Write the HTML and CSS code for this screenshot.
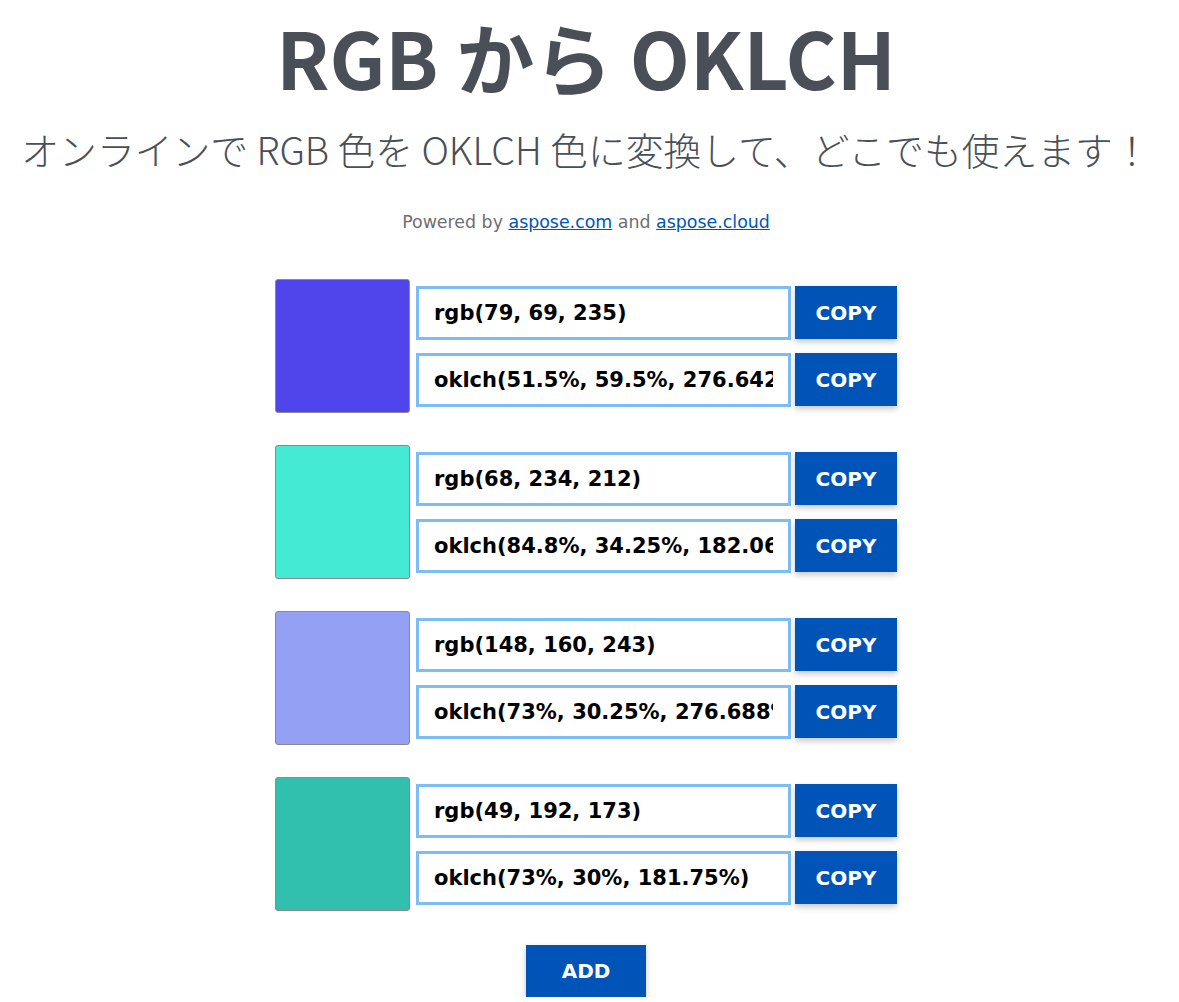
FILE: index.html
```html
<!DOCTYPE html>
<html lang="ja">
<head>
<meta charset="utf-8">
<title>RGB から OKLCH</title>
<link rel="stylesheet" href="styles.css">
</head>
<body>
<header class="head">
  <h1 class="title">RGB から OKLCH</h1>
  <p class="subtitle">オンラインで RGB 色を OKLCH 色に変換して、どこでも使えます！</p>
  <p class="powered">Powered by <a href="#">aspose.com</a> and <a href="#">aspose.cloud</a></p>
</header>
<main class="list">
  <div class="group">
    <div class="swatch" style="background:#4f45eb"></div>
    <div class="fields">
      <div class="line"><input class="val" value="rgb(79, 69, 235)"><button class="btn">COPY</button></div>
      <div class="line"><input class="val" value="oklch(51.5%, 59.5%, 276.642%)"><button class="btn">COPY</button></div>
    </div>
  </div>
  <div class="group">
    <div class="swatch" style="background:#44ead4"></div>
    <div class="fields">
      <div class="line"><input class="val" value="rgb(68, 234, 212)"><button class="btn">COPY</button></div>
      <div class="line"><input class="val" value="oklch(84.8%, 34.25%, 182.06%)"><button class="btn">COPY</button></div>
    </div>
  </div>
  <div class="group">
    <div class="swatch" style="background:#94a0f3"></div>
    <div class="fields">
      <div class="line"><input class="val" value="rgb(148, 160, 243)"><button class="btn">COPY</button></div>
      <div class="line"><input class="val" value="oklch(73%, 30.25%, 276.688%)"><button class="btn">COPY</button></div>
    </div>
  </div>
  <div class="group">
    <div class="swatch" style="background:#31c0ad"></div>
    <div class="fields">
      <div class="line"><input class="val" value="rgb(49, 192, 173)"><button class="btn">COPY</button></div>
      <div class="line"><input class="val" value="oklch(73%, 30%, 181.75%)"><button class="btn">COPY</button></div>
    </div>
  </div>
  <div class="addwrap"><button class="btn add">ADD</button></div>
</main>
</body>
</html>
```
FILE: styles.css
```css
html, body {
  margin: 0;
  padding: 0;
  background: #fff;
}
body {
  margin-right: 7px;
  font-family: "Noto Sans CJK JP", "Noto Sans", sans-serif;
  color: #4a4f57;
}
.head {
  text-align: center;
}
.title {
  margin: 0;
  padding-top: 10px;
  font-size: 78px;
  line-height: 92px;
  font-weight: 700;
  color: #4a4f57;
}
.subtitle {
  margin: 22px 0 0;
  font-size: 37.8px;
  line-height: 50px;
  font-weight: 300;
  color: #4a4f57;
}
.powered {
  margin: 37px 0 0;
  font-family: "DejaVu Sans", "Noto Sans", sans-serif;
  font-size: 17.4px;
  line-height: 22px;
  color: #6d6f73;
}
.powered a {
  color: #0054b8;
}
.list {
  width: 622px;
  margin: 46px auto 0;
  display: flex;
  flex-direction: column;
  gap: 32px;
}
.group {
  display: flex;
  align-items: center;
  gap: 6px;
}
.swatch {
  width: 133px;
  height: 132px;
  border: 1px solid #8a8a8a;
  border-radius: 3px;
  flex: none;
}
.fields {
  display: flex;
  flex-direction: column;
  gap: 13px;
}
.line {
  display: flex;
  align-items: center;
  gap: 4px;
}
.val {
  box-sizing: border-box;
  width: 375px;
  height: 54px;
  border: 3px solid #7dbdf6;
  padding: 0 15px;
  font-family: "DejaVu Sans", sans-serif;
  font-weight: 700;
  font-size: 21px;
  color: #000;
  outline: none;
  background: #fff;
}
.btn {
  width: 102px;
  height: 53px;
  border: none;
  background: #0054b8;
  color: #fff;
  font-family: "DejaVu Sans", sans-serif;
  font-weight: 700;
  font-size: 20px;
  box-shadow: 0 3px 6px rgba(0, 0, 0, 0.22);
  cursor: pointer;
}
.addwrap {
  display: flex;
  justify-content: center;
  margin-top: 2px;
}
.add {
  width: 120px;
  height: 52px;
}
```
